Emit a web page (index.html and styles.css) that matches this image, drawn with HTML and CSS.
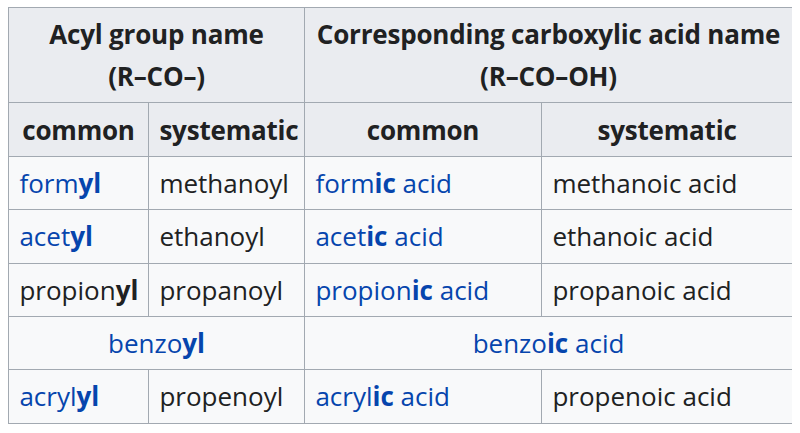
FILE: index.html
```html
<!DOCTYPE html>
<html lang="en">
<head>
<meta charset="utf-8">
<title>Acyl groups</title>
<link rel="stylesheet" href="styles.css">
</head>
<body>
<table class="wikitable">
  <colgroup>
    <col class="c1"><col class="c2"><col class="c3"><col class="c4">
  </colgroup>
  <thead>
    <tr>
      <th colspan="2">Acyl group name<br>(R–CO–)</th>
      <th colspan="2">Corresponding carboxylic acid name<br>(R–CO–OH)</th>
    </tr>
    <tr>
      <th>common</th>
      <th>systematic</th>
      <th>common</th>
      <th>systematic</th>
    </tr>
  </thead>
  <tbody>
    <tr>
      <td><a href="#">form<b>yl</b></a></td>
      <td>methanoyl</td>
      <td><a href="#">form<b>ic</b> acid</a></td>
      <td>methanoic acid</td>
    </tr>
    <tr>
      <td><a href="#">acet<b>yl</b></a></td>
      <td>ethanoyl</td>
      <td><a href="#">acet<b>ic</b> acid</a></td>
      <td>ethanoic acid</td>
    </tr>
    <tr>
      <td>propion<b>yl</b></td>
      <td>propanoyl</td>
      <td><a href="#">propion<b>ic</b> acid</a></td>
      <td>propanoic acid</td>
    </tr>
    <tr>
      <td colspan="2" class="center"><a href="#">benzo<b>yl</b></a></td>
      <td colspan="2" class="center"><a href="#">benzo<b>ic</b> acid</a></td>
    </tr>
    <tr>
      <td><a href="#">acryl<b>yl</b></a></td>
      <td>propenoyl</td>
      <td><a href="#">acryl<b>ic</b> acid</a></td>
      <td>propenoic acid</td>
    </tr>
  </tbody>
</table>
</body>
</html>
```

FILE: styles.css
```css
html, body {
  background: #ffffff;
}
body {
  margin: 7px 8px 8px;
  font-family: "Open Sans", "Noto Sans", sans-serif;
  font-size: 26px;
  line-height: 42px;
  color: #202122;
}
.wikitable {
  border-collapse: collapse;
  table-layout: fixed;
  width: 784px;
  background: #f8f9fa;
  border: 1px solid #a2a9b1;
  color: #202122;
}
.c1 { width: 140px; }
.c2 { width: 156px; }
.c3 { width: 237px; }
.c4 { width: 251px; }
.wikitable th,
.wikitable td {
  border: 1px solid #a2a9b1;
  padding: 5.2px 10.4px;
  white-space: nowrap;
}
.wikitable th {
  background: #eaecf0;
  text-align: center;
  font-weight: 700;
  letter-spacing: -0.2px;
}
.wikitable td {
  text-align: left;
}
.wikitable td.center {
  text-align: center;
}
.wikitable a {
  color: #0645ad;
  text-decoration: none;
}
.wikitable b {
  font-weight: 700;
}
```
